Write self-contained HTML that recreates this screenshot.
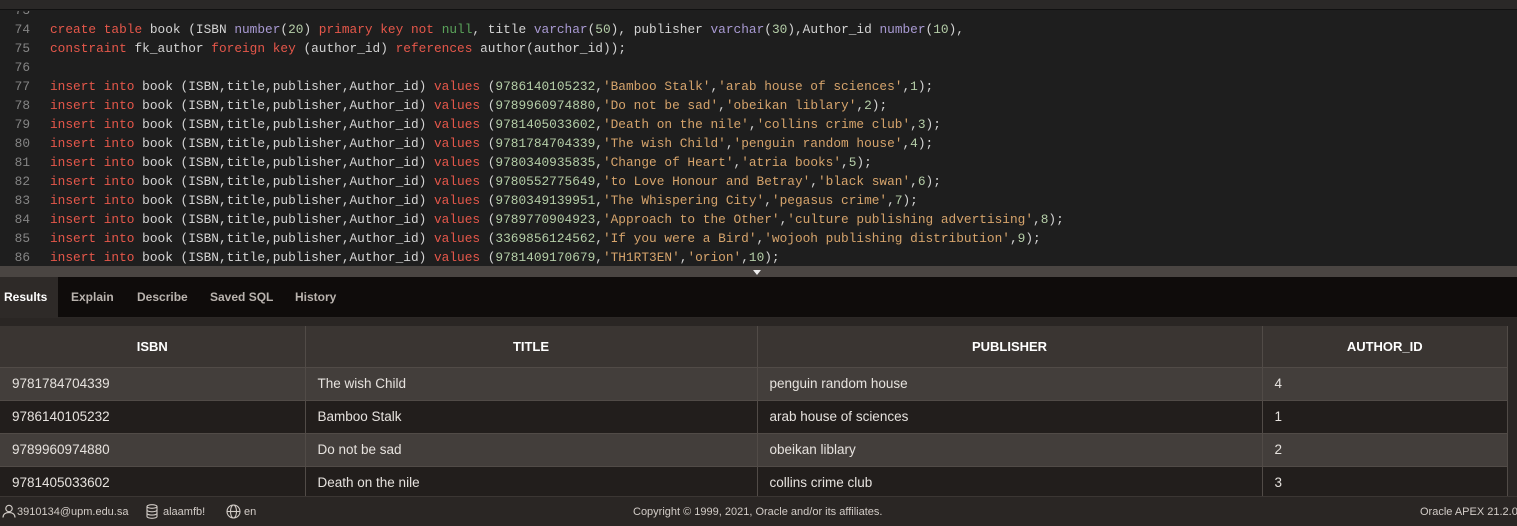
<!DOCTYPE html>
<html><head><meta charset="utf-8"><style>
*{margin:0;padding:0;box-sizing:border-box}
body{width:1517px;height:526px;overflow:hidden;background:#1e1e1e;font-family:"Liberation Sans",sans-serif;position:relative}
.top{position:absolute;left:0;top:0;width:1517px;height:10px;background:#2a2827;border-bottom:1px solid #111}
.code{position:absolute;left:0;top:11px;width:1517px;height:255px;background:#1e1e1e;font-family:"Liberation Mono",monospace;font-size:12.8px;color:#d4d4d4;overflow:hidden}
.ln{position:absolute;left:0;width:30px;text-align:right;color:#858585}
.ln span{display:inline-block;width:22px;text-align:right}
.l{position:absolute;left:50px;white-space:pre}
.k{color:#e5574a}.t{color:#a99ad3}.g{color:#5aa35a}.n{color:#b5cea8}.s{color:#d6a46c}
.split{position:absolute;left:0;top:266px;width:1517px;height:11px;background:#4a4542}
.tri{position:absolute;left:753px;top:270px;width:0;height:0;border-left:4px solid transparent;border-right:4px solid transparent;border-top:5px solid #eee}
.tabs{position:absolute;left:0;top:277px;width:1517px;height:41px;background:#0f0c0b;border-bottom:1px solid #2c2826}
.tab{position:absolute;top:0;height:41px;line-height:41px;font-size:12px;font-weight:bold;color:#b9b3ae}
.gap{position:absolute;left:0;top:318px;width:1517px;height:178px;background:#2a2624}
table{position:absolute;left:0;top:326px;border-collapse:collapse;width:1508px;font-size:13.5px;color:#e6e2de}
th{height:41px;background:#3a3532;font-weight:bold;font-size:13px;color:#fff;border-right:1px solid #514b47;border-bottom:1px solid #514b47}
td{padding-left:12px;border-right:1px solid #514b47;border-bottom:1px solid #514b47}
tr.a td{background:#433e3b;height:33px}
tr.b td{background:#221e1c;height:33px}
.foot{position:absolute;left:0;top:496px;width:1517px;height:30px;background:#2a2624;border-top:1px solid #3b3633;font-size:11px;color:#d2ccc7}
.foot span{position:absolute;top:9px;white-space:nowrap}
.sb{position:absolute;left:1508px;top:326px;width:9px;height:170px;background:#2a2624}
</style></head><body>
<div class="top"></div>
<div class="code">
<div class="ln" style="top:-8px"><span>73</span></div>
<div class="ln" style="top:11px"><span>74</span></div>
<div class="ln" style="top:30px"><span>75</span></div>
<div class="ln" style="top:49px"><span>76</span></div>
<div class="ln" style="top:68px"><span>77</span></div>
<div class="ln" style="top:87px"><span>78</span></div>
<div class="ln" style="top:106px"><span>79</span></div>
<div class="ln" style="top:125px"><span>80</span></div>
<div class="ln" style="top:144px"><span>81</span></div>
<div class="ln" style="top:163px"><span>82</span></div>
<div class="ln" style="top:182px"><span>83</span></div>
<div class="ln" style="top:201px"><span>84</span></div>
<div class="ln" style="top:220px"><span>85</span></div>
<div class="ln" style="top:239px"><span>86</span></div>
<div class="l" style="top:11px"><span class="k">create table</span> book (ISBN <span class="t">number</span>(<span class="n">20</span>) <span class="k">primary key not</span> <span class="g">null</span>, title <span class="t">varchar</span>(<span class="n">50</span>), publisher <span class="t">varchar</span>(<span class="n">30</span>),Author_id <span class="t">number</span>(<span class="n">10</span>),</div>
<div class="l" style="top:30px"><span class="k">constraint</span> fk_author <span class="k">foreign key</span> (author_id) <span class="k">references</span> author(author_id));</div>
<div class="l" style="top:68px"><span class="k">insert into</span> book (ISBN,title,publisher,Author_id) <span class="k">values</span> (<span class="n">9786140105232</span>,<span class="s">'Bamboo Stalk'</span>,<span class="s">'arab house of sciences'</span>,<span class="n">1</span>);</div>
<div class="l" style="top:87px"><span class="k">insert into</span> book (ISBN,title,publisher,Author_id) <span class="k">values</span> (<span class="n">9789960974880</span>,<span class="s">'Do not be sad'</span>,<span class="s">'obeikan liblary'</span>,<span class="n">2</span>);</div>
<div class="l" style="top:106px"><span class="k">insert into</span> book (ISBN,title,publisher,Author_id) <span class="k">values</span> (<span class="n">9781405033602</span>,<span class="s">'Death on the nile'</span>,<span class="s">'collins crime club'</span>,<span class="n">3</span>);</div>
<div class="l" style="top:125px"><span class="k">insert into</span> book (ISBN,title,publisher,Author_id) <span class="k">values</span> (<span class="n">9781784704339</span>,<span class="s">'The wish Child'</span>,<span class="s">'penguin random house'</span>,<span class="n">4</span>);</div>
<div class="l" style="top:144px"><span class="k">insert into</span> book (ISBN,title,publisher,Author_id) <span class="k">values</span> (<span class="n">9780340935835</span>,<span class="s">'Change of Heart'</span>,<span class="s">'atria books'</span>,<span class="n">5</span>);</div>
<div class="l" style="top:163px"><span class="k">insert into</span> book (ISBN,title,publisher,Author_id) <span class="k">values</span> (<span class="n">9780552775649</span>,<span class="s">'to Love Honour and Betray'</span>,<span class="s">'black swan'</span>,<span class="n">6</span>);</div>
<div class="l" style="top:182px"><span class="k">insert into</span> book (ISBN,title,publisher,Author_id) <span class="k">values</span> (<span class="n">9780349139951</span>,<span class="s">'The Whispering City'</span>,<span class="s">'pegasus crime'</span>,<span class="n">7</span>);</div>
<div class="l" style="top:201px"><span class="k">insert into</span> book (ISBN,title,publisher,Author_id) <span class="k">values</span> (<span class="n">9789770904923</span>,<span class="s">'Approach to the Other'</span>,<span class="s">'culture publishing advertising'</span>,<span class="n">8</span>);</div>
<div class="l" style="top:220px"><span class="k">insert into</span> book (ISBN,title,publisher,Author_id) <span class="k">values</span> (<span class="n">3369856124562</span>,<span class="s">'If you were a Bird'</span>,<span class="s">'wojooh publishing distribution'</span>,<span class="n">9</span>);</div>
<div class="l" style="top:239px"><span class="k">insert into</span> book (ISBN,title,publisher,Author_id) <span class="k">values</span> (<span class="n">9781409170679</span>,<span class="s">'TH1RT3EN'</span>,<span class="s">'orion'</span>,<span class="n">10</span>);</div>
</div>
<div class="split"></div><div class="tri"></div>
<div class="tabs">
<div class="tab" style="left:0;width:58px;background:#2e2a28;color:#fff;padding-left:4px">Results</div>
<div class="tab" style="left:71px">Explain</div>
<div class="tab" style="left:137px">Describe</div>
<div class="tab" style="left:210px">Saved SQL</div>
<div class="tab" style="left:295px">History</div>
</div>
<div class="gap"></div>
<table>
<tr><th style="width:305px">ISBN</th><th style="width:452px">TITLE</th><th style="width:505px">PUBLISHER</th><th>AUTHOR_ID</th></tr>
<tr class="a"><td>9781784704339</td><td>The wish Child</td><td>penguin random house</td><td>4</td></tr>
<tr class="b"><td>9786140105232</td><td>Bamboo Stalk</td><td>arab house of sciences</td><td>1</td></tr>
<tr class="a"><td>9789960974880</td><td>Do not be sad</td><td>obeikan liblary</td><td>2</td></tr>
<tr class="b"><td style="height:29px">9781405033602</td><td>Death on the nile</td><td>collins crime club</td><td>3</td></tr>
</table>
<div class="sb"></div>
<div class="foot">
<svg style="position:absolute;left:2px;top:7px" width="14" height="14" viewBox="0 0 14 14" fill="none" stroke="#d2ccc7" stroke-width="1.2"><circle cx="7" cy="4.5" r="3.2"/><path d="M1 13.5c0-3.5 2.7-5 6-5s6 1.5 6 5"/></svg>
<span style="left:17px">3910134@upm.edu.sa</span>
<svg style="position:absolute;left:146px;top:7px" width="12" height="15" viewBox="0 0 12 15" fill="none" stroke="#d2ccc7" stroke-width="1.1"><ellipse cx="6" cy="2.5" rx="5" ry="1.8"/><path d="M1 2.5v10c0 1 2.2 1.8 5 1.8s5-.8 5-1.8v-10M1 6c0 1 2.2 1.8 5 1.8S11 7 11 6M1 9.3c0 1 2.2 1.8 5 1.8s5-.8 5-1.8"/></svg>
<span style="left:163px">alaamfb!</span>
<svg style="position:absolute;left:226px;top:7px" width="15" height="15" viewBox="0 0 15 15" fill="none" stroke="#d2ccc7" stroke-width="1.1"><circle cx="7.5" cy="7.5" r="6.5"/><ellipse cx="7.5" cy="7.5" rx="3" ry="6.5"/><path d="M1 7.5h13"/></svg>
<span style="left:244px">en</span>
<span style="left:633px">Copyright © 1999, 2021, Oracle and/or its affiliates.</span>
<span style="left:1420px">Oracle APEX 21.2.0</span>
</div>
</body></html>
